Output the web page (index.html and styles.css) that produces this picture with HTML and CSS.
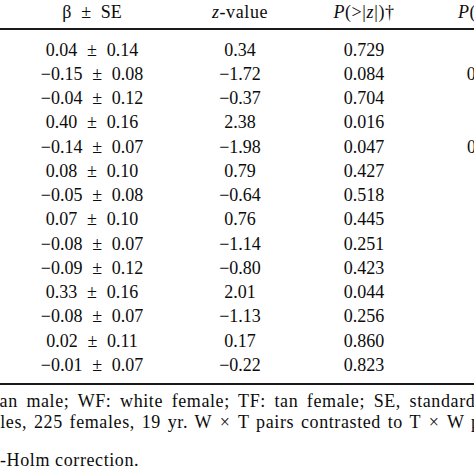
FILE: index.html
```html
<!DOCTYPE html>
<html lang="en">
<head>
<meta charset="utf-8">
<title>Table</title>
<link rel="stylesheet" href="styles.css">
</head>
<body>
<div class="sheet">
  <div class="row head">
    <div class="cell">β <span class="pm">±</span> SE</div>
    <div class="cell wide"><i>z</i>-value</div>
    <div class="cell wide"><i>P</i>(&gt;|<i>z</i>|)†</div>
    <div class="cell wide"><i>P</i>(adj)‡</div>
  </div>
  <div class="rule top"></div>
  <div class="rows">
    <div class="row"><div class="cell">0.04 <span class="pm">±</span> 0.14</div><div class="cell">0.34</div><div class="cell">0.729</div><div class="cell">1</div></div>
    <div class="row"><div class="cell">−0.15 <span class="pm">±</span> 0.08</div><div class="cell">−1.72</div><div class="cell">0.084</div><div class="cell">0.924</div></div>
    <div class="row"><div class="cell">−0.04 <span class="pm">±</span> 0.12</div><div class="cell">−0.37</div><div class="cell">0.704</div><div class="cell">1</div></div>
    <div class="row"><div class="cell">0.40 <span class="pm">±</span> 0.16</div><div class="cell">2.38</div><div class="cell">0.016</div><div class="cell">1</div></div>
    <div class="row"><div class="cell">−0.14 <span class="pm">±</span> 0.07</div><div class="cell">−1.98</div><div class="cell">0.047</div><div class="cell">0.611</div></div>
    <div class="row"><div class="cell">0.08 <span class="pm">±</span> 0.10</div><div class="cell">0.79</div><div class="cell">0.427</div><div class="cell">1</div></div>
    <div class="row"><div class="cell">−0.05 <span class="pm">±</span> 0.08</div><div class="cell">−0.64</div><div class="cell">0.518</div><div class="cell">1.0</div></div>
    <div class="row"><div class="cell">0.07 <span class="pm">±</span> 0.10</div><div class="cell">0.76</div><div class="cell">0.445</div><div class="cell">1</div></div>
    <div class="row"><div class="cell">−0.08 <span class="pm">±</span> 0.07</div><div class="cell">−1.14</div><div class="cell">0.251</div><div class="cell">1.0</div></div>
    <div class="row"><div class="cell">−0.09 <span class="pm">±</span> 0.12</div><div class="cell">−0.80</div><div class="cell">0.423</div><div class="cell">1</div></div>
    <div class="row"><div class="cell">0.33 <span class="pm">±</span> 0.16</div><div class="cell">2.01</div><div class="cell">0.044</div><div class="cell">1</div></div>
    <div class="row"><div class="cell">−0.08 <span class="pm">±</span> 0.07</div><div class="cell">−1.13</div><div class="cell">0.256</div><div class="cell">1.0</div></div>
    <div class="row"><div class="cell">0.02 <span class="pm">±</span> 0.11</div><div class="cell">0.17</div><div class="cell">0.860</div><div class="cell">1</div></div>
    <div class="row"><div class="cell">−0.01 <span class="pm">±</span> 0.07</div><div class="cell">−0.22</div><div class="cell">0.823</div><div class="cell">1.0</div></div>
  </div>
  <div class="rule bottom"></div>
  <div class="notes">
    <div class="line l1">tan male; WF: white female; TF: tan female; SE, standard</div>
    <div class="line l2">males, 225 females, 19 yr. W <span class="x">×</span> T pairs contrasted to T <span class="x">×</span> W p</div>
    <div class="line l3"><span class="lead"><span>Bonferroni</span></span><span>-Holm correction.</span></div>
  </div>
</div>
</body>
</html>
```

FILE: styles.css
```css
html, body {
  margin: 0;
  padding: 0;
  background: #ffffff;
  overflow: hidden;
}
body {
  width: 474px;
  height: 474px;
  color: #0c0c0c;
  font-family: "Liberation Serif", "Times New Roman", serif;
}
.sheet {
  width: 550px;
}
.row {
  display: grid;
  grid-template-columns: 184px 112px 136px 110px;
  font-size: 18px;
  line-height: 24.25px;
  height: 24.25px;
}
.cell {
  text-align: center;
  white-space: nowrap;
}
.cell.wide {
  letter-spacing: 0.6px;
}
.pm {
  margin: 0 5.2px;
}
.rule {
  width: 550px;
  height: 2px;
  background: #1a1a1a;
}
.rule.top {
  margin-top: 3.75px;
}
.rows {
  padding-top: 7.5px;
}
.rule.bottom {
  margin-top: 6px;
}
.notes {
  margin-top: 5.5px;
  font-size: 18px;
  line-height: 21.5px;
  letter-spacing: 0.6px;
}
.line {
  white-space: nowrap;
}
.l1 {
  margin-left: -6px;
  word-spacing: 3.5px;
}
.l2 {
  margin-left: -23px;
  word-spacing: 1.75px;
}
.x {
  margin: 0 1px;
}
.l3 {
  display: flex;
  margin-top: 16px;
}
.lead {
  width: 0;
  display: flex;
  justify-content: flex-end;
}
```
